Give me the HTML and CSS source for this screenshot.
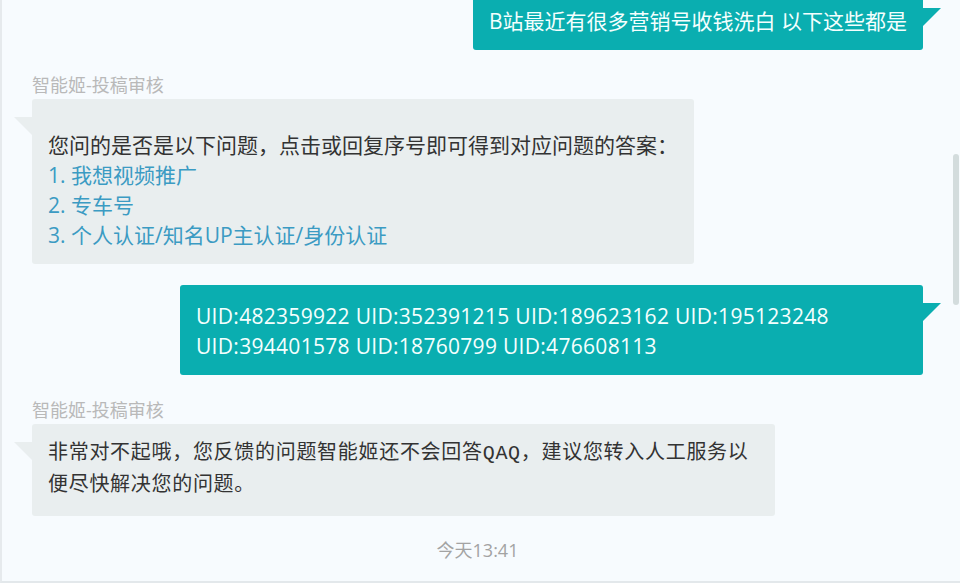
FILE: index.html
```html
<!DOCTYPE html>
<html lang="zh-CN">
<head>
    <meta charset="UTF-8">
    <meta name="viewport" content="width=device-width, initial-scale=1.0">
    <title>智能姬客服</title>
    <link rel="stylesheet" href="styles.css">
</head>
<body>
    <div class="chat-panel">
        <div class="messages">
            <div class="msg msg-self">
                <div class="bubble">B站最近有很多营销号收钱洗白 以下这些都是</div>
            </div>

            <div class="msg msg-bot">
                <div class="sender">智能姬-投稿审核</div>
                <div class="bubble menu">
                    <div>您问的是否是以下问题，点击或回复序号即可得到对应问题的答案：</div>
                    <a class="option">1. 我想视频推广</a>
                    <a class="option">2. 专车号</a>
                    <a class="option">3. 个人认证/知名UP主认证/身份认证</a>
                </div>
            </div>

            <div class="msg msg-self">
                <div class="bubble ids">UID:482359922 UID:352391215 UID:189623162 UID:195123248 UID:394401578 UID:18760799 UID:476608113</div>
            </div>

            <div class="msg msg-bot">
                <div class="sender">智能姬-投稿审核</div>
                <div class="bubble plain">非常对不起哦，您反馈的问题智能姬还不会回答QAQ，建议您转入人工服务以便尽快解决您的问题。</div>
            </div>

            <div class="time">今天13:41</div>
        </div>
        <div class="scroll-thumb"></div>
    </div>
    <div class="input-area"></div>
</body>
</html>
```

FILE: styles.css
```css
body {
    margin: 0;
    background-color: #ffffff;
    font-family: "Open Sans", "Noto Sans CJK SC", sans-serif;
}
.chat-panel {
    position: relative;
    height: 581px;
    overflow: hidden;
    background-color: #f7fbfe;
    border-left: 2px solid #e6eaed;
    border-bottom: 2px solid #e3e8eb;
}
.messages {
    display: flex;
    flex-direction: column;
    gap: 21px;
    margin-top: -10px;
    padding: 0 37px 0 30px;
}
.msg {
    display: flex;
    flex-direction: column;
}
.msg-self {
    align-items: flex-end;
}
.msg-bot {
    align-items: flex-start;
}
.sender {
    padding-top: 4px;
    margin-bottom: 4px;
    font-size: 18px;
    line-height: 20px;
    color: #b9b9b9;
}
.bubble {
    position: relative;
    max-width: 743px;
    box-sizing: border-box;
    padding: 16px 16px 14px;
    border-radius: 3px;
    font-size: 21px;
    line-height: 30px;
}
.bubble::after {
    content: "";
    position: absolute;
    top: 18px;
    width: 0;
    height: 0;
}
.msg-self .bubble {
    background-color: #0aaeb0;
    color: #f4fffe;
}
.msg-self .bubble::after {
    right: -18px;
    border-top: 18px solid #0aaeb0;
    border-right: 18px solid transparent;
}
.msg-bot .bubble {
    background-color: #e9eeef;
    color: #333333;
}
.msg-bot .bubble::after {
    left: -18px;
    border-top: 18px solid #e9eeef;
    border-left: 18px solid transparent;
}
.ids {
    letter-spacing: 0.3px;
}
.menu {
    padding-top: 31px;
}
.option {
    display: block;
    color: #3b9bc3;
    cursor: pointer;
}
.plain {
    padding: 14px 16px;
    font-family: "Liberation Mono", "Noto Sans CJK SC", monospace;
    font-size: 20px;
    line-height: 32px;
    letter-spacing: 0.7px;
    color: #2a2a2a;
}
.time {
    margin-top: 3px;
    text-align: center;
    font-size: 18px;
    line-height: 20px;
    color: #a3a3a3;
}
.scroll-thumb {
    position: absolute;
    top: 154px;
    right: 1px;
    width: 6px;
    height: 151px;
    border-radius: 3px;
    background-color: #d3dcdd;
}
.input-area {
    height: 3px;
    background-color: #ffffff;
}
```
